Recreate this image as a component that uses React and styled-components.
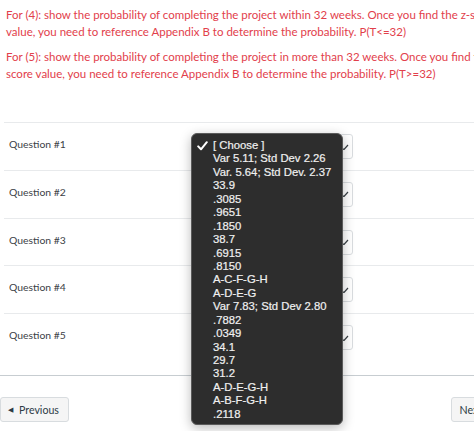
import styled, { createGlobalStyle } from "styled-components";

const GlobalStyle = createGlobalStyle`
  html, body {
    margin: 0;
    padding: 0;
    background: #ffffff;
    overflow: hidden;
  }
  body {
    width: 474px;
    height: 431px;
  }
`;

const Page = styled.div`
  position: relative;
  width: 520px;
  height: 431px;
  font-family: Lato, "Open Sans", sans-serif;
`;

const Notes = styled.div`
  display: flex;
  flex-direction: column;
  gap: 8px;
  padding: 6px 0 0 6px;
  color: #e2404b;
  font-size: 11.5px;
  line-height: 17px;
  white-space: nowrap;
`;

const Note = styled.p`
  margin: 0;
`;

const List = styled.div`
  margin: 40px 0 0 4px;
  border-top: 1px solid #e8eaec;
`;

const Row = styled.div`
  display: flex;
  justify-content: space-between;
  height: ${(p) => (p.$last ? "61px" : "46.75px")};
  border-bottom: ${(p) => (p.$last ? "none" : "1px solid #e8eaec")};
  padding-right: 167px;
`;

const Label = styled.div`
  padding: 13px 0 0 5px;
  color: #3b4146;
  font-size: 10.4px;
  line-height: 16px;
`;

const Select = styled.div`
  margin-top: 11px;
  width: 150px;
  height: 25px;
  box-sizing: border-box;
  border: 1px solid #dadde0;
  border-radius: 3px;
  background: #fff;
  display: flex;
  align-items: center;
  justify-content: flex-end;
  padding-right: 3px;
`;

const Footer = styled.div`
  display: flex;
  justify-content: space-between;
  border-top: 1px solid #c7cdd1;
  padding: 21px 0 0 0;
  width: 520px;
`;

const NavButton = styled.div`
  display: flex;
  align-items: center;
  gap: 6px;
  height: 25px;
  box-sizing: border-box;
  padding: 0 9px 0 7px;
  background: #f5f5f5;
  border: 1px solid #d8dcdf;
  border-radius: 3px;
  color: #2d3b45;
  font-size: 10.6px;
  margin-left: ${(p) => p.$ml || "0"};
  margin-right: ${(p) => p.$mr || "0"};
`;

const Arrow = styled.span`
  font-size: 7px;
  color: #2d3b45;
`;

const Menu = styled.div`
  position: absolute;
  left: 191px;
  top: 133px;
  width: 152px;
  height: 292px;
  box-sizing: border-box;
  background: #2d2d2d;
  border: 1px solid #5a5a5a;
  border-radius: 6px;
  box-shadow: 0 3px 12px rgba(0, 0, 0, 0.28);
  padding-top: 5px;
  font-family: "Liberation Sans", Arial, sans-serif;
`;

const Item = styled.div`
  position: relative;
  height: 13.45px;
  line-height: 13.45px;
  padding-left: 21px;
  color: #f0f0f0;
  font-size: 11.3px;
  -webkit-text-stroke: 0.2px #f0f0f0;
  white-space: nowrap;
`;

const Check = styled.svg`
  position: absolute;
  left: 5px;
  top: 2px;
`;

const options = [
  "[ Choose ]",
  "Var 5.11; Std Dev 2.26",
  "Var. 5.64; Std Dev. 2.37",
  "33.9",
  ".3085",
  ".9651",
  ".1850",
  "38.7",
  ".6915",
  ".8150",
  "A-C-F-G-H",
  "A-D-E-G",
  "Var 7.83; Std Dev 2.80",
  ".7882",
  ".0349",
  "34.1",
  "29.7",
  "31.2",
  "A-D-E-G-H",
  "A-B-F-G-H",
  ".2118",
];

const Chevron = () => (
  <svg width="8" height="6" viewBox="0 0 8 6">
    <path d="M1 4.5 L3 5.5 L7 1" fill="none" stroke="#3b4146" strokeWidth="1.2" />
  </svg>
);

export default function App() {
  return (
    <>
      <GlobalStyle />
      <Page>
        <Notes>
          <Note>
            For (4): show the probability of completing the project within 32 weeks. Once you find the z-score
            <br />
            value, you need to reference Appendix B to determine the probability. P(T&lt;=32)
          </Note>
          <Note>
            For (5): show the probability of completing the project in more than 32 weeks. Once you find the z-
            <br />
            score value, you need to reference Appendix B to determine the probability. P(T&gt;=32)
          </Note>
        </Notes>
        <List>
          {[1, 2, 3, 4, 5].map((n) => (
            <Row key={n} $last={n === 5}>
              <Label>Question #{n}</Label>
              <Select>
                <Chevron />
              </Select>
            </Row>
          ))}
        </List>
        <Footer>
          <NavButton $ml="0px">
            <Arrow>◀</Arrow>
            Previous
          </NavButton>
          <NavButton $mr="28px">Next</NavButton>
        </Footer>
        <Menu>
          {options.map((o, i) => (
            <Item key={o}>
              {i === 0 && (
                <Check width="11" height="10" viewBox="0 0 11 10">
                  <path d="M1.2 5.4 L4 8.3 L9.8 1.2" fill="none" stroke="#ffffff" strokeWidth="2" strokeLinecap="round" strokeLinejoin="round" />
                </Check>
              )}
              {o}
            </Item>
          ))}
        </Menu>
      </Page>
    </>
  );
}
